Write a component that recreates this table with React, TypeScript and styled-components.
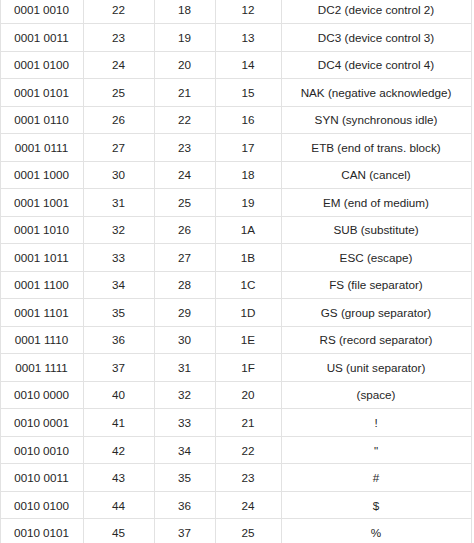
import React from "react";
import styled, { createGlobalStyle } from "styled-components";

const Global = createGlobalStyle`
  html, body { margin: 0; padding: 0; background: #ffffff; }
  body { font-family: "Liberation Sans", Arial, sans-serif; overflow: hidden; }
`;

const Table = styled.table`
  border-collapse: collapse;
  table-layout: fixed;
  width: 471px;
  margin-top: -4.5px;
  margin-left: -0.5px;
  font-family: "Liberation Sans", Arial, sans-serif;
  font-size: 11.7px;
  color: #262626;
`;

const Col = styled.col<{ $w: number }>`
  width: ${(p) => p.$w}px;
`;

const Row = styled.tr`
  height: 27.52px;
`;

const Cell = styled.td`
  border: 1px solid #e2e2e2;
  padding: 0;
  text-align: center;
  vertical-align: middle;
  white-space: nowrap;
  line-height: 13px;
`;

const rows: [string, string, string, string, string][] = [
  ["0001 0010", "22", "18", "12", "DC2 (device control 2)"],
  ["0001 0011", "23", "19", "13", "DC3 (device control 3)"],
  ["0001 0100", "24", "20", "14", "DC4 (device control 4)"],
  ["0001 0101", "25", "21", "15", "NAK (negative acknowledge)"],
  ["0001 0110", "26", "22", "16", "SYN (synchronous idle)"],
  ["0001 0111", "27", "23", "17", "ETB (end of trans. block)"],
  ["0001 1000", "30", "24", "18", "CAN (cancel)"],
  ["0001 1001", "31", "25", "19", "EM (end of medium)"],
  ["0001 1010", "32", "26", "1A", "SUB (substitute)"],
  ["0001 1011", "33", "27", "1B", "ESC (escape)"],
  ["0001 1100", "34", "28", "1C", "FS (file separator)"],
  ["0001 1101", "35", "29", "1D", "GS (group separator)"],
  ["0001 1110", "36", "30", "1E", "RS (record separator)"],
  ["0001 1111", "37", "31", "1F", "US (unit separator)"],
  ["0010 0000", "40", "32", "20", "(space)"],
  ["0010 0001", "41", "33", "21", "!"],
  ["0010 0010", "42", "34", "22", "\""],
  ["0010 0011", "43", "35", "23", "#"],
  ["0010 0100", "44", "36", "24", "$"],
  ["0010 0101", "45", "37", "25", "%"],
];

export default function App() {
  return (
    <>
      <Global />
      <Table>
        <colgroup>
          <Col $w={83} />
          <Col $w={71} />
          <Col $w={61} />
          <Col $w={66} />
          <Col $w={190} />
        </colgroup>
        <tbody>
          {rows.map((r) => (
            <Row key={r[0]}>
              {r.map((c, i) => (
                <Cell key={i}>{c}</Cell>
              ))}
            </Row>
          ))}
        </tbody>
      </Table>
    </>
  );
}
